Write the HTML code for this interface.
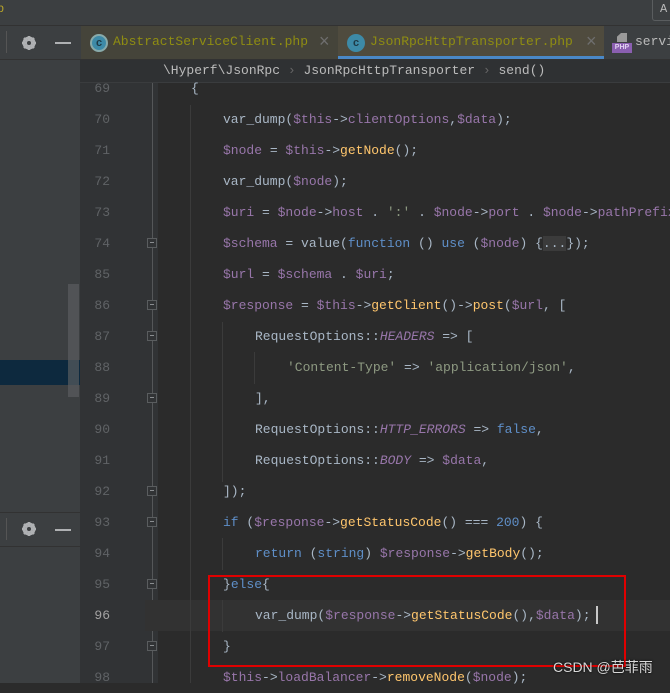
<!DOCTYPE html>
<html><head><meta charset="utf-8">
<style>
*{margin:0;padding:0;box-sizing:border-box}
body{width:670px;height:683px;overflow:hidden;background:#2b2b2b;position:relative;font-family:"Liberation Mono",monospace;font-size:13px}
.a{position:absolute}
.ln{position:absolute;width:30px;left:80px;text-align:right;color:#606366;font-size:13px;line-height:31px}
.c{position:absolute;white-space:pre;line-height:31px;color:#a9b7c6}
.v{color:#9876aa}.k{color:#5f8fc8}.m{color:#ffc66d}.s{color:#8e9a82}.i{color:#9876aa;font-style:italic}.o{color:#a9b7c6}
.fold{position:absolute;left:147px;width:10px;height:10px;border:1px solid #5a5d5f;background:#313335}
.fold:after{content:"";position:absolute;left:2px;top:3px;width:4px;height:1px;background:#8a8d90}
.gear{position:absolute;width:16px;height:16px}
</style></head><body>
<!-- top bar -->
<div class="a" style="left:0;top:0;width:670px;height:26px;background:#3c3f41;border-bottom:1px solid #323232"></div>
<div class="a" style="left:-3px;top:2px;color:#b5a22a;font-size:12px">p</div>
<div class="a" style="left:652px;top:0;width:24px;height:21px;border:1px solid #5a5d5f;border-top:none;border-radius:0 0 0 3px;color:#bbb;font-size:12px;padding:2px 0 0 7px">A</div>
<!-- left panel -->
<div class="a" style="left:0;top:26px;width:80px;height:657px;background:#3c3f41"></div>
<div class="a" style="left:0;top:59px;width:80px;height:1px;background:#323232"></div>
<div class="a" style="left:6px;top:31px;width:1px;height:22px;background:#555"></div>
<svg class="a" style="left:21px;top:35px" width="16" height="16" viewBox="0 0 16 16"><circle cx="8" cy="8" r="5" fill="none" stroke="#afb1b3" stroke-width="3"/><g stroke="#afb1b3" stroke-width="2.5"><line x1="8" y1="1" x2="8" y2="15"/><line x1="1" y1="8" x2="15" y2="8"/><line x1="3" y1="3" x2="13" y2="13"/><line x1="13" y1="3" x2="3" y2="13"/></g><circle cx="8" cy="8" r="2" fill="#3c3f41"/></svg>
<div class="a" style="left:55px;top:42px;width:16px;height:2px;background:#afb1b3"></div>
<div class="a" style="left:0;top:360px;width:80px;height:25px;background:#0d293e"></div>
<div class="a" style="left:68px;top:284px;width:11px;height:113px;background:#5a5d5f;opacity:.7"></div>
<div class="a" style="left:0;top:512px;width:80px;height:1px;background:#323232"></div>
<div class="a" style="left:0;top:546px;width:80px;height:1px;background:#323232"></div>
<div class="a" style="left:6px;top:518px;width:1px;height:22px;background:#555"></div>
<svg class="a" style="left:21px;top:521px" width="16" height="16" viewBox="0 0 16 16"><circle cx="8" cy="8" r="5" fill="none" stroke="#afb1b3" stroke-width="3"/><g stroke="#afb1b3" stroke-width="2.5"><line x1="8" y1="1" x2="8" y2="15"/><line x1="1" y1="8" x2="15" y2="8"/><line x1="3" y1="3" x2="13" y2="13"/><line x1="13" y1="3" x2="3" y2="13"/></g><circle cx="8" cy="8" r="2" fill="#3c3f41"/></svg>
<div class="a" style="left:55px;top:529px;width:16px;height:2px;background:#afb1b3"></div>
<!-- tab bar -->
<div class="a" style="left:80px;top:26px;width:590px;height:34px;background:#3c3f41;border-bottom:1px solid #323232"></div>
<div class="a" style="left:81px;top:26px;width:257px;height:33px;background:#45443a"></div>
<div class="a" style="left:338px;top:26px;width:266px;height:33px;background:#4f4b3e"></div>
<div class="a" style="left:338px;top:56px;width:266px;height:3px;background:#4a88c7"></div>
<div class="a" style="left:90px;top:34px;width:18px;height:18px;border-radius:50%;background:#3d8aa7;border:2px solid #8aa;color:#1e3a46;font:bold 11px 'Liberation Sans',sans-serif;text-align:center;line-height:14px">c</div>
<div class="a" style="left:113px;top:34px;color:#8f8d12;font-size:13px">AbstractServiceClient.php</div>
<div class="a" style="left:319px;top:31px;color:#6e6e6e;font:18px 'Liberation Sans',sans-serif">×</div>
<div class="a" style="left:347px;top:34px;width:18px;height:18px;border-radius:50%;background:#3d8aa7;color:#1e3a46;font:bold 11px 'Liberation Sans',sans-serif;text-align:center;line-height:18px">c</div>
<div class="a" style="left:370px;top:34px;color:#8f8d12;font-size:13px">JsonRpcHttpTransporter.php</div>
<div class="a" style="left:586px;top:31px;color:#6e6e6e;font:18px 'Liberation Sans',sans-serif">×</div>
<div class="a" style="left:617px;top:33px;width:10px;height:9px;background:#9a9a9a;clip-path:polygon(40% 0,100% 0,100% 100%,0 100%,0 40%)"></div>
<div class="a" style="left:612px;top:43px;width:20px;height:10px;background:#8a5fb0;color:#e0d0f0;font:bold 7px 'Liberation Sans',sans-serif;text-align:center;line-height:10px">PHP</div>
<div class="a" style="left:635px;top:34px;color:#bbbbbb;font-size:13px">servi</div>
<!-- breadcrumb -->
<div class="a" style="left:80px;top:60px;width:590px;height:23px;background:#2f3133;border-bottom:1px solid #3a3c3e"></div>
<div class="a" style="left:163px;top:63px;color:#bbbbbb;white-space:pre;font-size:13px">\Hyperf\JsonRpc <span style="color:#666">›</span> JsonRpcHttpTransporter <span style="color:#666">›</span> send()</div>
<!-- gutter -->
<div class="a" style="left:80px;top:83px;width:78px;height:600px;background:#313335"></div>
<div class="a" style="left:152px;top:83px;width:1px;height:600px;background:#555759"></div>
<div class="a" style="left:145px;top:600px;width:525px;height:31px;background:#323232"></div>
<div class="a" style="left:158px;top:600px;width:512px;height:31px;background:#323232"></div>
<!-- indent guides -->
<div class="a" style="left:190px;top:105px;width:1px;height:578px;background:#3b3b3b"></div>
<div class="a" style="left:222px;top:322px;width:1px;height:160px;background:#3b3b3b"></div>
<div class="a" style="left:254px;top:352px;width:1px;height:32px;background:#3b3b3b"></div>
<div class="a" style="left:222px;top:538px;width:1px;height:32px;background:#3b3b3b"></div>
<div class="a" style="left:222px;top:600px;width:1px;height:32px;background:#3b3b3b"></div>

<div class="ln" style="top:73px">69</div>
<div class="ln" style="top:104px">70</div>
<div class="ln" style="top:135px">71</div>
<div class="ln" style="top:166px">72</div>
<div class="ln" style="top:197px">73</div>
<div class="ln" style="top:228px">74</div>
<div class="ln" style="top:259px">85</div>
<div class="ln" style="top:290px">86</div>
<div class="ln" style="top:321px">87</div>
<div class="ln" style="top:352px">88</div>
<div class="ln" style="top:383px">89</div>
<div class="ln" style="top:414px">90</div>
<div class="ln" style="top:445px">91</div>
<div class="ln" style="top:476px">92</div>
<div class="ln" style="top:507px">93</div>
<div class="ln" style="top:538px">94</div>
<div class="ln" style="top:569px">95</div>
<div class="ln" style="top:600px;color:#a4a3a3">96</div>
<div class="ln" style="top:631px">97</div>
<div class="ln" style="top:662px">98</div>

<div class="fold" style="top:238px"></div>
<div class="fold" style="top:300px"></div>
<div class="fold" style="top:331px"></div>
<div class="fold" style="top:393px"></div>
<div class="fold" style="top:486px"></div>
<div class="fold" style="top:517px"></div>
<div class="fold" style="top:579px"></div>
<div class="fold" style="top:641px"></div>

<div class="c" style="left:191px;top:73px">{</div>
<div class="c" style="left:223px;top:104px">var_dump(<span class="v">$this</span>-><span class="v">clientOptions</span>,<span class="v">$data</span>);</div>
<div class="c" style="left:223px;top:135px"><span class="v">$node</span> = <span class="v">$this</span>-><span class="m">getNode</span>();</div>
<div class="c" style="left:223px;top:166px">var_dump(<span class="v">$node</span>);</div>
<div class="c" style="left:223px;top:197px"><span class="v">$uri</span> = <span class="v">$node</span>-><span class="v">host</span> . <span class="s">':'</span> . <span class="v">$node</span>-><span class="v">port</span> . <span class="v">$node</span>-><span class="v">pathPrefix</span></div>
<div class="c" style="left:223px;top:228px"><span class="v">$schema</span> = value(<span class="k">function</span> () <span class="k">use</span> (<span class="v">$node</span>) {<span style="background:#3b3b3b">...</span>});</div>
<div class="c" style="left:223px;top:259px"><span class="v">$url</span> = <span class="v">$schema</span> . <span class="v">$uri</span>;</div>
<div class="c" style="left:223px;top:290px"><span class="v">$response</span> = <span class="v">$this</span>-><span class="m">getClient</span>()-><span class="m">post</span>(<span class="v">$url</span>, [</div>
<div class="c" style="left:255px;top:321px">RequestOptions::<span class="i">HEADERS</span> => [</div>
<div class="c" style="left:287px;top:352px"><span class="s">'Content-Type'</span> => <span class="s">'application/json'</span>,</div>
<div class="c" style="left:255px;top:383px">],</div>
<div class="c" style="left:255px;top:414px">RequestOptions::<span class="i">HTTP_ERRORS</span> => <span class="k">false</span>,</div>
<div class="c" style="left:255px;top:445px">RequestOptions::<span class="i">BODY</span> => <span class="v">$data</span>,</div>
<div class="c" style="left:223px;top:476px">]);</div>
<div class="c" style="left:223px;top:507px"><span class="k">if</span> (<span class="v">$response</span>-><span class="m">getStatusCode</span>() === <span class="k">200</span>) {</div>
<div class="c" style="left:255px;top:538px"><span class="k">return</span> (<span class="k">string</span>) <span class="v">$response</span>-><span class="m">getBody</span>();</div>
<div class="c" style="left:223px;top:569px">}<span class="k">else</span>{</div>
<div class="c" style="left:255px;top:600px">var_dump(<span class="v">$response</span>-><span class="m">getStatusCode</span>(),<span class="v">$data</span>);</div>
<div class="a" style="left:596px;top:606px;width:2px;height:18px;background:#c8c8c8"></div>
<div class="c" style="left:223px;top:631px">}</div>
<div class="c" style="left:223px;top:662px"><span class="v">$this</span>-><span class="v">loadBalancer</span>-><span class="m">removeNode</span>(<span class="v">$node</span>);</div>

<!-- red box -->
<div class="a" style="left:208px;top:575px;width:418px;height:92px;border:2px solid #e00000"></div>
<div class="a" style="left:553px;top:657px;color:#d8d8d8;font:14px 'Liberation Sans','Noto Sans CJK SC',sans-serif;text-shadow:0 0 2px #000">CSDN @芭菲雨</div>
</body></html>
